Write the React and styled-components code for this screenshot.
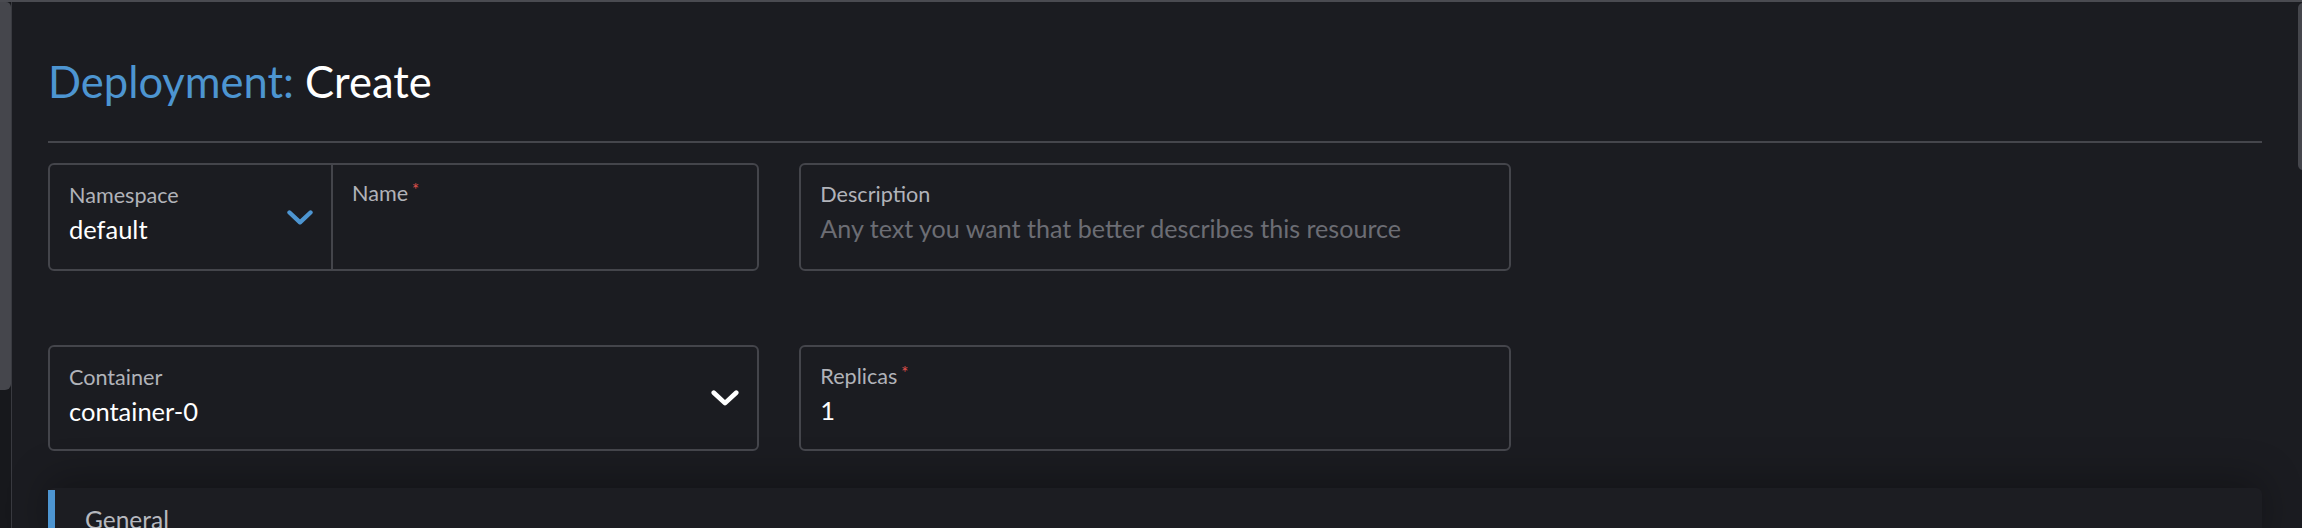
import React from "react";
import styled, { createGlobalStyle } from "styled-components";

const GlobalStyle = createGlobalStyle`
  html, body { margin: 0; padding: 0; background: #1b1c21; }
  body { font-family: Lato, "Noto Sans", sans-serif; overflow: hidden; }
  * { box-sizing: border-box; }
`;

const Frame = styled.div`
  display: flex;
  height: 528px;
  border-top: 2px solid #4a4b51;
  background: #1b1c21;
  overflow: hidden;
`;

const LeftRail = styled.div`
  width: 12px;
  flex: none;
  background: #17181c;
  border-right: 1px solid #393a40;
`;

const RailThumb = styled.div`
  width: 11px;
  height: ${(p) => p.$h}px;
  background: #45464c;
  border-radius: ${(p) => p.$radius};
  margin-top: ${(p) => p.$top || 0}px;
`;

const RightRail = styled.div`
  width: 4px;
  flex: none;
`;

const Main = styled.main`
  flex: 1;
  min-width: 0;
  padding: 0 36px;
`;

const Header = styled.header`
  padding-top: 54px;
  padding-bottom: 35px;
  border-bottom: 2px solid #45464c;
`;

const Title = styled.h1`
  margin: 0;
  font-size: 43.5px;
  line-height: 50px;
  font-weight: 400;
  color: #ffffff;
`;

const TitleType = styled.span`
  color: #4d95d1;
`;

const Grid = styled.div`
  margin-top: 20px;
  display: grid;
  grid-template-columns: repeat(3, 1fr);
  column-gap: 40px;
  row-gap: 74px;
`;

const Box = styled.div`
  display: flex;
  height: ${(p) => p.$h}px;
  border: 2px solid #44454b;
  border-radius: 6px;
`;

const Segment = styled.div`
  flex: ${(p) => (p.$w ? "none" : "1")};
  width: ${(p) => (p.$w ? `${p.$w}px` : "auto")};
  display: flex;
  align-items: center;
  padding: 0 18px 0 19px;
  border-right: ${(p) => (p.$divider ? "2px solid #44454b" : "none")};
`;

const FieldText = styled.div`
  flex: 1;
  min-width: 0;
  align-self: flex-start;
  padding-top: ${(p) => p.$top}px;
`;

const Label = styled.div`
  font-size: 21.6px;
  line-height: 25px;
  color: #b1b3b9;
`;

const Required = styled.span`
  color: #e0504b;
  font-size: 17px;
  vertical-align: top;
  line-height: 17px;
  margin-left: 4px;
`;

const Value = styled.div`
  margin-top: 6px;
  font-size: ${(p) => (p.$placeholder ? "25.1px" : "25.5px")};
  line-height: 30px;
  height: 30px;
  color: ${(p) => (p.$placeholder ? "#6c6d74" : "#ffffff")};
  white-space: nowrap;
`;

const Chevron = styled.svg`
  flex: none;
  width: ${(p) => p.$w}px;
  height: ${(p) => p.$h}px;
  margin-top: ${(p) => p.$dy || 0}px;
`;

const TabsPanel = styled.section`
  margin-top: 37px;
  height: 60px;
  background: #1c1d22;
  border-radius: 6px 6px 0 0;
  box-shadow: 0 -8px 40px rgba(0, 0, 0, 0.3);
  display: flex;
`;

const TabList = styled.div`
  width: 300px;
  padding-top: 2px;
`;

const Tab = styled.div`
  height: 100%;
  border-left: 7px solid ${(p) => (p.$active ? "#4d95d1" : "transparent")};
  padding: 15px 0 0 30px;
  font-size: 24.5px;
  line-height: 29px;
  color: #b6b8be;
`;

const ChevronDown = ({ color, w, h, dy }) => (
  <Chevron $w={w} $h={h} $dy={dy} viewBox="0 0 26 15" fill="none">
    <polyline
      points="2.5,2.5 13,12.3 23.5,2.5"
      stroke={color}
      strokeWidth="4.4"
      strokeLinecap="round"
      strokeLinejoin="round"
    />
  </Chevron>
);

export default function App() {
  return (
    <>
      <GlobalStyle />
      <Frame>
        <LeftRail>
          <RailThumb $h={388} $radius="0 5px 6px 0" />
        </LeftRail>
        <Main>
          <Header>
            <Title>
              <TitleType>Deployment:</TitleType> Create
            </Title>
          </Header>
          <Grid>
            <Box $h={108}>
              <Segment $w={283} $divider>
                <FieldText $top={18}>
                  <Label>Namespace</Label>
                  <Value>default</Value>
                </FieldText>
                <ChevronDown color="#4d95d1" w={26} h={15} dy={0} />
              </Segment>
              <Segment>
                <FieldText $top={16}>
                  <Label>
                    Name<Required>*</Required>
                  </Label>
                  <Value />
                </FieldText>
              </Segment>
            </Box>
            <Box $h={108}>
              <Segment>
                <FieldText $top={17}>
                  <Label>Description</Label>
                  <Value $placeholder>Any text you want that better describes this resource</Value>
                </FieldText>
              </Segment>
            </Box>
            <div />
            <Box $h={106}>
              <Segment>
                <FieldText $top={18}>
                  <Label>Container</Label>
                  <Value>container-0</Value>
                </FieldText>
                <ChevronDown color="#ffffff" w={28} h={16} />
              </Segment>
            </Box>
            <Box $h={106}>
              <Segment>
                <FieldText $top={17}>
                  <Label>
                    Replicas<Required>*</Required>
                  </Label>
                  <Value>1</Value>
                </FieldText>
              </Segment>
            </Box>
            <div />
          </Grid>
          <TabsPanel>
            <TabList>
              <Tab $active>General</Tab>
            </TabList>
          </TabsPanel>
        </Main>
        <RightRail>
          <RailThumb $h={167} $top={1} $radius="5px 0 0 5px" />
        </RightRail>
      </Frame>
    </>
  );
}
